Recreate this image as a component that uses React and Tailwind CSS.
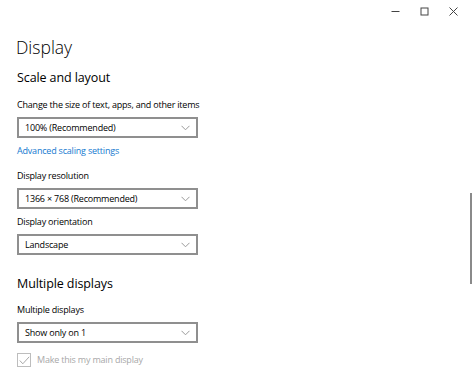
function Chevron() {
  return (
    <svg width="9" height="6" viewBox="0 0 9 6" className="shrink-0">
      <polyline points="0.5,0.8 4.5,4.8 8.5,0.8" fill="none" stroke="#9a9a9a" strokeWidth="1" />
    </svg>
  )
}

function Select({ value }) {
  return (
    <div className="w-[181px] h-[21px] border-2 border-[#8f8f8f] flex items-center justify-between pl-[6px] pr-[6px] text-[9px] tracking-[-0.2px] text-[#000]">
      <span>{value}</span>
      <Chevron />
    </div>
  )
}

function Label({ children, className = '' }) {
  return <div className={`text-[9px] tracking-[-0.2px] leading-[14px] text-[#000] ${className}`}>{children}</div>
}

export default function App() {
  return (
    <div
      className="relative w-[474px] h-[382px] bg-white overflow-hidden"
      style={{ fontFamily: '"Open Sans", "Noto Sans", sans-serif' }}
    >
      {/* title bar buttons */}
      <div className="absolute top-[4px] right-[6px] flex items-center">
        <div className="w-[29px] h-[14px] flex items-center justify-center">
          <svg width="9" height="9" viewBox="0 0 9 9">
            <line x1="0.5" y1="4.5" x2="8.5" y2="4.5" stroke="#444" strokeWidth="1" />
          </svg>
        </div>
        <div className="w-[29px] h-[14px] flex items-center justify-center">
          <svg width="9" height="9" viewBox="0 0 9 9">
            <rect x="1" y="1" width="7" height="7" fill="none" stroke="#444" strokeWidth="1" />
          </svg>
        </div>
        <div className="w-[29px] h-[14px] flex items-center justify-center">
          <svg width="9" height="9" viewBox="0 0 9 9">
            <path d="M0.5 0.5 L8.5 8.5 M8.5 0.5 L0.5 8.5" stroke="#444" strokeWidth="1" />
          </svg>
        </div>
      </div>

      {/* scrollbar */}
      <div className="absolute right-[2px] top-[193px] w-[2px] h-[91px] bg-[#8a8a8a]" />

      <div className="pl-[17px] pt-[34px] flex flex-col">
        <div className="text-[17.5px] leading-[26px] text-[#000] font-light -ml-[1px]">Display</div>

        <div className="mt-[8px] text-[12.5px] tracking-[-0.1px] leading-[20px] text-[#000]">Scale and layout</div>

        <Label className="mt-[10px]">Change the size of text, apps, and other items</Label>
        <div className="mt-[5px]"><Select value="100% (Recommended)" /></div>

        <div className="mt-[6px] text-[9px] tracking-[-0.2px] leading-[14px] text-[#1479cf]">Advanced scaling settings</div>

        <Label className="mt-[11px]">Display resolution</Label>
        <div className="mt-[5px]"><Select value="1366 × 768 (Recommended)" /></div>

        <Label className="mt-[6px]">Display orientation</Label>
        <div className="mt-[5px]"><Select value="Landscape" /></div>

        <div className="mt-[19px] text-[12.5px] tracking-[-0.1px] leading-[20px] text-[#000]">Multiple displays</div>

        <Label className="mt-[9px]">Multiple displays</Label>
        <div className="mt-[5px]"><Select value="Show only on 1" /></div>

        <div className="mt-[10px] flex items-center gap-[6px]">
          <div className="w-[14px] h-[14px] border border-[#bdbdbd] flex items-center justify-center">
            <svg width="11" height="9" viewBox="0 0 11 9">
              <polyline points="0.8,4.5 3.8,7.8 10.2,0.8" fill="none" stroke="#a8a8a8" strokeWidth="1" />
            </svg>
          </div>
          <span className="text-[9px] tracking-[-0.2px] leading-[14px] text-[#a8a8a8]">Make this my main display</span>
        </div>
      </div>
    </div>
  )
}
